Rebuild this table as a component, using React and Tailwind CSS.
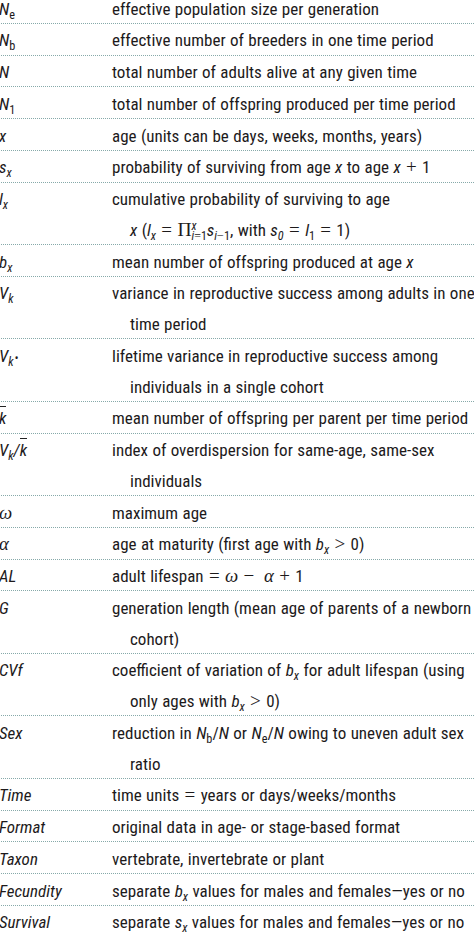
function Sub(props) {
  return <span className="align-[-0.3em] text-[0.72em] leading-none not-italic">{props.children}</span>
}
function ISub(props) {
  return <span className="align-[-0.3em] text-[0.72em] leading-none italic">{props.children}</span>
}
function Op(props) {
  return <span className="font-['Liberation_Serif',serif] not-italic text-[1.12em] leading-none mx-[0.28em]">{props.children}</span>
}
function Gk(props) {
  return <span className="font-['Liberation_Serif',serif] italic text-[1.1em] leading-none">{props.children}</span>
}
function Kbar() {
  return <span className="italic border-t border-[#222] leading-none pt-px">k</span>
}
function Prod() {
  return (
    <>
      <span className="font-['Liberation_Serif',serif] not-italic text-[1.15em] leading-none">Π</span>
      <span className="inline-flex flex-col h-[20px] justify-between align-middle indent-0 text-[0.7em] leading-[10px] italic">
        <span className="indent-0">x</span>
        <span className="indent-0">i<span className="not-italic font-['Liberation_Serif',serif]">=</span><span className="not-italic">1</span></span>
      </span>
    </>
  )
}

var rows = [
  [1, <><i>N</i><Sub>e</Sub></>, <>effective population size per generation</>],
  [1, <><i>N</i><Sub>b</Sub></>, <>effective number of breeders in one time period</>],
  [1, <i>N</i>, <>total number of adults alive at any given time</>],
  [1, <><i>N</i><Sub>1</Sub></>, <>total number of offspring produced per time period</>],
  [1, <i>x</i>, <>age (units can be days, weeks, months, years)</>],
  [1, <><i>s</i><ISub>x</ISub></>, <>probability of surviving from age <i>x</i> to age <i>x</i><Op>+</Op>1</>],
  [2, <><i>l</i><ISub>x</ISub></>, <>cumulative probability of surviving to age<br /><i>x</i> (<i>l</i><ISub>x</ISub><Op>=</Op><Prod /><i>s</i><ISub>i<span className="not-italic font-['Liberation_Serif',serif]">−</span><span className="not-italic">1</span></ISub>, with <i>s</i><ISub>0</ISub><Op>=</Op><i>l</i><Sub>1</Sub><Op>=</Op>1)</>],
  [1, <><i>b</i><ISub>x</ISub></>, <>mean number of offspring produced at age <i>x</i></>],
  [2, <><i>V</i><ISub>k</ISub></>, <>variance in reproductive success among adults in one<br />time period</>],
  [2, <><i>V</i><ISub>k</ISub><span className="text-[0.7em] ml-px">•</span></>, <>lifetime variance in reproductive success among<br />individuals in a single cohort</>],
  [1, <Kbar />, <>mean number of offspring per parent per time period</>],
  [2, <><i>V</i><ISub>k</ISub>/<Kbar /></>, <>index of overdispersion for same-age, same-sex<br />individuals</>],
  [1, <Gk>ω</Gk>, <>maximum age</>],
  [1, <Gk>α</Gk>, <>age at maturity (first age with <i>b</i><ISub>x</ISub><Op>&gt;</Op>0)</>],
  [1, <i>AL</i>, <>adult lifespan<Op>=</Op><Gk>ω</Gk><Op>−</Op> <Gk>α</Gk><Op>+</Op>1</>],
  [2, <i>G</i>, <>generation length (mean age of parents of a newborn<br />cohort)</>],
  [2, <i>CVf</i>, <>coefficient of variation of <i>b</i><ISub>x</ISub> for adult lifespan (using<br />only ages with <i>b</i><ISub>x</ISub><Op>&gt;</Op>0)</>],
  [2, <i>Sex</i>, <>reduction in <i>N</i><Sub>b</Sub>/<i>N</i> or <i>N</i><Sub>e</Sub>/<i>N</i> owing to uneven adult sex<br />ratio</>],
  [1, <i>Time</i>, <>time units<Op>=</Op>years or days/weeks/months</>],
  [1, <i>Format</i>, <>original data in age- or stage-based format</>],
  [1, <i>Taxon</i>, <>vertebrate, invertebrate or plant</>],
  [1, <i>Fecundity</i>, <>separate <i>b</i><ISub>x</ISub> values for males and females—yes or no</>],
  [1, <i>Survival</i>, <>separate <i>s</i><ISub>x</ISub> values for males and females—yes or no</>],
]

export default function App() {
  return (
    <div className="w-[474px] h-[937px] overflow-hidden bg-white text-[#1d1a1b] font-['Roboto',sans-serif] font-stretch-condensed text-[17px] leading-[30.75px] [word-spacing:0.5px]">
      <div className="-mt-[8px] -ml-[1px]">
        {rows.map(function(r, i) {
          var last = i === rows.length - 1
          return (
            <div key={i} className={'flex pt-[1.5px] ' + (r[0] === 2 ? 'h-[62.5px] ' : 'h-[31.75px] ') + (last ? '' : 'border-b border-dotted border-[#86a9a9]')}>
              <div className="w-[113px] shrink-0 italic whitespace-nowrap">{r[1]}</div>
              <div className="flex-1 min-w-0 pl-[18px] -indent-[18px] whitespace-nowrap">{r[2]}</div>
            </div>
          )
        })}
      </div>
    </div>
  )
}
